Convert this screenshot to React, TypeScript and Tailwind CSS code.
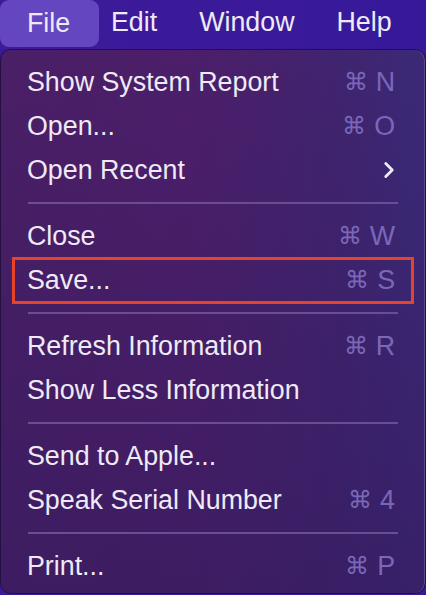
import React from 'react';
import { ChevronRight } from 'lucide-react';

type Item =
  | { kind: 'item'; label: string; key?: string; submenu?: boolean; marked?: boolean }
  | { kind: 'sep' };

const items: Item[] = [
  { kind: 'item', label: 'Show System Report', key: 'N' },
  { kind: 'item', label: 'Open...', key: 'O' },
  { kind: 'item', label: 'Open Recent', submenu: true },
  { kind: 'sep' },
  { kind: 'item', label: 'Close', key: 'W' },
  { kind: 'item', label: 'Save...', key: 'S', marked: true },
  { kind: 'sep' },
  { kind: 'item', label: 'Refresh Information', key: 'R' },
  { kind: 'item', label: 'Show Less Information' },
  { kind: 'sep' },
  { kind: 'item', label: 'Send to Apple...' },
  { kind: 'item', label: 'Speak Serial Number', key: '4' },
  { kind: 'sep' },
  { kind: 'item', label: 'Print...', key: 'P' },
];

const App = () => {
  return (
    <div
      className="w-[426px] h-[595px] overflow-hidden bg-[#381a99] text-[#eeeaf6] text-[26.8px] leading-none"
      style={{ fontFamily: '"Liberation Sans", Arial, sans-serif' }}
    >
      {/* menu bar */}
      <div className="flex h-[49px] items-start bg-[linear-gradient(to_right,#3d1b9c,#3a1a99_60%,#35199a)]">
        <div className="flex items-center pl-[27px] w-[99px] h-[47px] rounded-[9px] bg-[#6446c0]">File</div>
        <div className="flex items-center h-[45px] ml-[12px] gap-[42px]">
          <span>Edit</span>
          <span>Window</span>
          <span>Help</span>
        </div>
      </div>

      {/* dropdown panel */}
      <div className="relative h-[545px] rounded-[11px] border border-[#24113f] bg-[linear-gradient(to_bottom,rgba(74,31,104,0)_0%,rgba(52,27,94,0.6)_100%),linear-gradient(to_right,#4a1f66_0%,#4d1e6a_45%,#40246f_80%,#3b2a78_100%)] shadow-[inset_-1px_0_0_#5a4a8c] pt-[10px]">
        {items.map((it, idx) =>
          it.kind === 'sep' ? (
            <div key={idx} className="h-[22px] flex items-center px-[27px]">
              <div className="h-[2px] w-full bg-[#6a4d92]" />
            </div>
          ) : (
            <div key={idx} className="relative h-[44px] flex items-center justify-between pl-[26px] pr-[30px]">
              <span>{it.label}</span>
              {it.key && (
                <span className="flex items-center gap-[8px] text-[#7a67b8]">
                  <span className="text-[24px]">⌘</span>
                  <span>{it.key}</span>
                </span>
              )}
              {it.submenu && <ChevronRight className="w-[26px] h-[26px] -mr-[7px] text-[#eeeaf6]" strokeWidth={2.6} />}
              {it.marked && (
                <div className="absolute left-[11px] right-[11px] top-[-1px] bottom-[-2px] border-[3.5px] border-[#e6442a]" />
              )}
            </div>
          ),
        )}
      </div>
    </div>
  );
};

export default App;
